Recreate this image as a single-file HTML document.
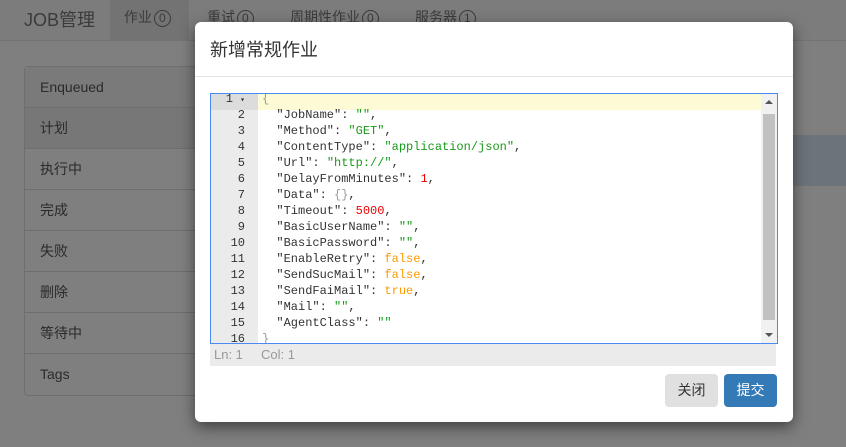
<!DOCTYPE html>
<html><head><meta charset="utf-8"><style>
*{box-sizing:border-box;margin:0;padding:0}
body{width:846px;height:447px;overflow:hidden;background:#fff;font-family:"Liberation Sans","Noto Sans CJK SC",sans-serif;position:relative}
.nav{position:absolute;left:0;top:0;width:846px;height:41px;background:#f8f8f8;border-bottom:1px solid #e7e7e7}
.brand{position:absolute;left:24px;top:6px;font-size:18px;color:#777}
.tab{position:absolute;top:0;height:41px;line-height:34px;font-size:14px;color:#777}
.badge{display:inline-block;border:1px solid #777;border-radius:9px;padding:0 4px;font-size:12px;line-height:15px;margin-left:2px}
.side{position:absolute;left:24px;top:66px;width:180px;border:1px solid #ddd;border-radius:4px;background:#fff}
.side div{height:41px;line-height:40px;padding-left:15px;font-size:14px;color:#555;border-bottom:1px solid #ddd}
.ov{position:absolute;inset:0;background:rgba(0,0,0,.5)}
.modal{position:absolute;left:195px;top:22px;width:598px;height:400px;background:#fff;border-radius:6px;box-shadow:0 5px 15px rgba(0,0,0,.5)}
.mh{height:55px;border-bottom:1px solid #e5e5e5;padding:14px 15px;font-size:18px;color:#333}
.ed{position:absolute;left:15px;top:71px;width:568px;height:251px;border:1px solid #4a8af4;background:#fff;overflow:hidden}
.gut{position:absolute;left:0;top:0;width:47px;height:100%;background:#ebebeb}
.ln{font-family:"Liberation Mono","DejaVu Sans Mono",monospace;font-size:12px;line-height:16px;height:16px;white-space:pre;color:#333}
.ln span,.ln i{position:relative}
.gut .ln{text-align:right;padding-right:13px}
.code{position:absolute;left:47px;top:0;right:16px}
.code .ln{padding-left:4px}
.t{display:block;position:relative;top:-3px}
.hl{background:#fdfad6}
.s{color:#1a9a1a}.n{color:#e00}.b{color:#f90}.p{color:#999}
.sb{position:absolute;right:0;top:0;width:16px;height:100%;background:#f1f1f1}
.thumb{position:absolute;left:2px;top:20px;width:12px;height:206px;background:#c1c1c1}
.st{position:absolute;left:15px;top:322px;width:566px;height:22px;background:#ebebeb;font-size:13px;color:#999;line-height:22px;padding-left:4px}
.btn{position:absolute;top:352px;height:33px;width:53px;border-radius:4px;font-size:14px;text-align:center;line-height:33px}
</style></head><body>
<div class="nav">
<div class="brand">JOB管理</div>
<div class="tab" style="left:110px;width:79px;background:#e7e7e7;padding-left:14px">作业<span class="badge">0</span></div>
<div class="tab" style="left:207px">重试<span class="badge">0</span></div>
<div class="tab" style="left:290px">周期性作业<span class="badge">0</span></div>
<div class="tab" style="left:415px">服务器<span class="badge">1</span></div>
</div>
<div class="side">
<div style="background:#f5f5f5">Enqueued</div><div style="background:#eee">计划</div><div>执行中</div><div>完成</div><div>失败</div><div>删除</div><div>等待中</div><div style="border:0">Tags</div>
</div>
<div style="position:absolute;left:793px;top:135px;width:53px;height:51px;background:#d9e8f4"></div>
<div class="ov"></div>
<div class="modal">
<div class="mh">新增常规作业</div>
<div class="ed">
<div class="gut">
<div class="ln" style="background:#dcdcdc"><i class="t" style="font-style:normal">1 <span style="font-size:8px">▾</span></i></div>
<div class="ln"><i class="t" style="font-style:normal">2</i></div><div class="ln"><i class="t" style="font-style:normal">3</i></div><div class="ln"><i class="t" style="font-style:normal">4</i></div><div class="ln"><i class="t" style="font-style:normal">5</i></div><div class="ln"><i class="t" style="font-style:normal">6</i></div><div class="ln"><i class="t" style="font-style:normal">7</i></div><div class="ln"><i class="t" style="font-style:normal">8</i></div><div class="ln"><i class="t" style="font-style:normal">9</i></div><div class="ln"><i class="t" style="font-style:normal">10</i></div><div class="ln"><i class="t" style="font-style:normal">11</i></div><div class="ln"><i class="t" style="font-style:normal">12</i></div><div class="ln"><i class="t" style="font-style:normal">13</i></div><div class="ln"><i class="t" style="font-style:normal">14</i></div><div class="ln"><i class="t" style="font-style:normal">15</i></div><div class="ln"><i class="t" style="font-style:normal">16</i></div>
</div>
<div class="code">
<div class="ln hl"><i class="t" style="font-style:normal"><span class="p">{</span></i></div>
<div class="ln"><i class="t" style="font-style:normal">  "JobName": <span class="s">""</span>,</i></div>
<div class="ln"><i class="t" style="font-style:normal">  "Method": <span class="s">"GET"</span>,</i></div>
<div class="ln"><i class="t" style="font-style:normal">  "ContentType": <span class="s">"application/json"</span>,</i></div>
<div class="ln"><i class="t" style="font-style:normal">  "Url": <span class="s">"http://"</span>,</i></div>
<div class="ln"><i class="t" style="font-style:normal">  "DelayFromMinutes": <span class="n">1</span>,</i></div>
<div class="ln"><i class="t" style="font-style:normal">  "Data": <span class="p">{}</span>,</i></div>
<div class="ln"><i class="t" style="font-style:normal">  "Timeout": <span class="n">5000</span>,</i></div>
<div class="ln"><i class="t" style="font-style:normal">  "BasicUserName": <span class="s">""</span>,</i></div>
<div class="ln"><i class="t" style="font-style:normal">  "BasicPassword": <span class="s">""</span>,</i></div>
<div class="ln"><i class="t" style="font-style:normal">  "EnableRetry": <span class="b">false</span>,</i></div>
<div class="ln"><i class="t" style="font-style:normal">  "SendSucMail": <span class="b">false</span>,</i></div>
<div class="ln"><i class="t" style="font-style:normal">  "SendFaiMail": <span class="b">true</span>,</i></div>
<div class="ln"><i class="t" style="font-style:normal">  "Mail": <span class="s">""</span>,</i></div>
<div class="ln"><i class="t" style="font-style:normal">  "AgentClass": <span class="s">""</span></i></div>
<div class="ln"><i class="t" style="font-style:normal"><span class="p">}</span></i></div>
</div>
<div class="sb"><div style="position:absolute;left:4px;top:6px;border:4px solid transparent;border-bottom:4px solid #555;border-top:0"></div><div class="thumb"></div><div style="position:absolute;left:4px;bottom:6px;border:4px solid transparent;border-top:4px solid #555;border-bottom:0"></div></div>
</div>
<div class="st">Ln: 1 &nbsp;&nbsp;&nbsp; Col: 1</div>
<div class="btn" style="left:470px;background:#e0e0e0;color:#333">关闭</div>
<div class="btn" style="left:529px;background:#337ab7;color:#fff">提交</div>
</div>
</body></html>
